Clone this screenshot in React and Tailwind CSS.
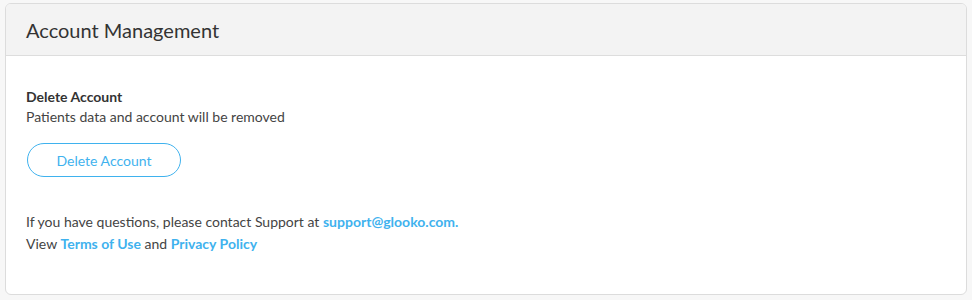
import React from 'react'

export default function App() {
  return (
    <div className="min-h-[300px] bg-[#f7f7f7] pt-[3px] px-[5px] pb-[5px] font-['Lato','Liberation_Sans',sans-serif]">
      <div className="bg-white border border-[#dcdcdc] rounded-md overflow-hidden">
        <div className="h-[52px] bg-[#f3f3f3] border-b border-[#dddddd] flex items-center px-5">
          <h1 className="text-[20px] text-[#333] leading-none">Account Management</h1>
        </div>
        <div className="px-5 pt-[31px] pb-[39px] text-[14px] text-[#444]">
          <div className="font-bold text-[#333] leading-5">Delete Account</div>
          <div className="leading-5">Patients data and account will be removed</div>
          <button className="mt-4 ml-px w-[154px] h-[34px] rounded-full border border-[#3fb2ee] text-[#3fb2ee] text-[14px] bg-white">
            Delete Account
          </button>
          <div className="mt-[34px] leading-[22px]">
            <div>
              If you have questions, please contact Support at{' '}
              <a className="font-bold text-[#3fb2ee]">support@glooko.com.</a>
            </div>
            <div>
              View <a className="font-bold text-[#3fb2ee]">Terms of Use</a> and{' '}
              <a className="font-bold text-[#3fb2ee]">Privacy Policy</a>
            </div>
          </div>
        </div>
      </div>
    </div>
  )
}
